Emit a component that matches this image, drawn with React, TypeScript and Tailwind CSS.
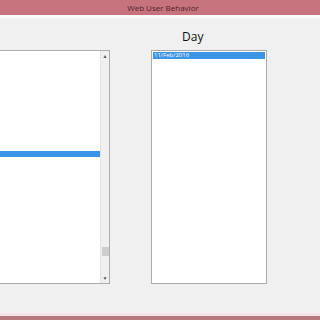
const App = () => {
  return (
    <div
      className="flex flex-col w-[320px] h-[320px] overflow-hidden bg-[#f0f0f0]"
      style={{ fontFamily: '"Open Sans", "Liberation Sans", sans-serif' }}
    >
      <div className="h-[15px] bg-[#c7737d] flex items-center justify-center">
        <span className="text-[8px] text-[#4e252c] ml-[6px]">Web User Behavior</span>
      </div>
      <div className="h-[3px] bg-[#fafafa]" />
      <div className="flex-1 flex flex-row pt-[32px]">
        {/* left list, cut by window edge */}
        <div className="w-[110px] h-[234px] bg-white border border-l-0 border-[#acacac] flex flex-row">
          <div className="flex-1 flex flex-col">
            <div className="h-[6px] mt-[100px] bg-[#3c94e6]" />
          </div>
          <div className="w-[9px] bg-[#f0f0f0] border-l border-[#e3e3e3] flex flex-col items-center">
            <span className="text-[5px] leading-[8px] text-[#555] mt-[1px]">▲</span>
            <div className="w-[7px] h-[9px] bg-[#cdcdcd] mt-[187px]" />
            <span className="text-[5px] leading-[8px] text-[#555] mt-auto mb-[1px]">▼</span>
          </div>
        </div>
        <div className="w-[41px]" />
        <div className="flex flex-col w-[116px] -mt-[21px]">
          <div className="h-[21px] pl-[31px] pt-[1px] text-[12px] leading-[14px] text-[#111]">Day</div>
          <div className="h-[234px] bg-white border border-[#acacac] p-[1px]">
            <div className="h-[7px] bg-[#3c94e6] text-[6px] leading-[7px] text-white pl-[1px]">
              11/Feb/2016
            </div>
          </div>
        </div>
      </div>
      <div className="h-[3px] bg-[#f6e2e8]" />
      <div className="h-[4px] bg-[#b97880]" />
    </div>
  );
};

export default App;
